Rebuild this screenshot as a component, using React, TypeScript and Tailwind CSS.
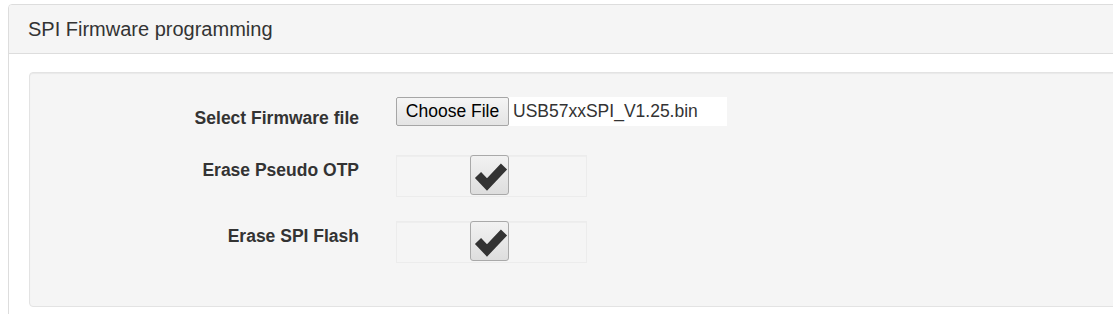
import React from "react";

function Check() {
  return (
    <svg width="39" height="40" viewBox="0 0 39 40" className="block">
      <polyline
        points="7,19 16,28.5 33,10.5"
        fill="none"
        stroke="#333333"
        strokeWidth="8.5"
        strokeLinejoin="miter"
        strokeLinecap="butt"
      />
    </svg>
  );
}

function CheckRow({ label, mt }: { label: string; mt: string }) {
  return (
    <div className={`flex ${mt}`}>
      <div className="w-[329px] text-right font-bold text-[17.5px] leading-[20px] text-[#333333] pt-[5px]">
        {label}
      </div>
      <div className="ml-[37px] w-[191px] h-[42px] border border-[#ececec] shadow-[inset_0_1px_1px_rgba(0,0,0,0.03)] pl-[73px]">
        <div className="mt-[-1px] w-[39px] h-[40px] rounded-[3px] border border-[#a9a9a9] bg-gradient-to-b from-[#f2f2f2] to-[#dedede]">
          <Check />
        </div>
      </div>
    </div>
  );
}

export default function App() {
  return (
    <div
      className="w-[1113px] h-[314px] bg-white overflow-hidden pt-[4px] pl-[8px]"
      style={{ fontFamily: '"Liberation Sans", Arial, sans-serif' }}
    >
      <div className="w-[1140px] h-[400px] border border-[#dddddd] rounded-t-[4px]">
        <div className="h-[49px] bg-[#f5f5f5] border-b border-[#dddddd] rounded-t-[3px] pl-[19px] flex items-center text-[20px] text-[#333333]">
          SPI Firmware programming
        </div>
        <div className="pt-[18px] pl-[20px]">
          <div className="h-[235px] bg-[#f5f5f5] border border-[#e3e3e3] rounded-[4px] shadow-[inset_0_1px_1px_rgba(0,0,0,0.05)]">
            <div className="flex mt-[24px] h-[29px]">
              <div className="w-[329px] text-right font-bold text-[17.5px] leading-[20px] text-[#333333] pt-[11px] whitespace-nowrap">
                Select Firmware file
              </div>
              <div className="ml-[37px] w-[331px] h-[29px] flex bg-white">
                <div className="w-[113px] h-full border border-[#a6a6a6] rounded-[2px] bg-gradient-to-b from-[#f5f5f5] to-[#e4e4e4] flex items-center justify-center text-[17.5px] text-black">
                  Choose File
                </div>
                <div className="pl-[4px] flex items-center text-[17.5px] text-[#333333]">
                  USB57xxSPI_V1.25.bin
                </div>
              </div>
            </div>
            <CheckRow label="Erase Pseudo OTP" mt="mt-[29px]" />
            <CheckRow label="Erase SPI Flash" mt="mt-[24px]" />
          </div>
        </div>
      </div>
    </div>
  );
}
